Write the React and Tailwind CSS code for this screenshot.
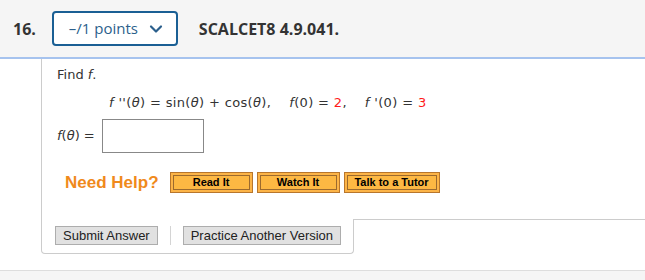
import React from 'react';
import { ChevronDown } from 'lucide-react';

const verdana = { fontFamily: '"DejaVu Sans", Verdana, sans-serif' };

const HelpButton = ({ label, width }) => (
  <button
    type="button"
    className={`h-[21px] ${width} border border-[#b8762c] bg-[#fdb843] shadow-[inset_0_0_0_2px_#fcb447,inset_0_0_0_3px_#9c6a2e] text-[11px] font-bold text-black font-['Liberation_Sans',Arial,sans-serif] leading-none`}
  >
    {label}
  </button>
);

const GreyButton = ({ children }) => (
  <button
    type="button"
    className="h-[19px] px-[7px] bg-[#e1e1e1] border border-[#adadad] text-[13px] leading-none text-[#222] font-['Liberation_Sans',Arial,sans-serif]"
  >
    {children}
  </button>
);

export default function App() {
  return (
    <div className="w-[645px] h-[280px] bg-white overflow-hidden font-['Open_Sans',sans-serif]">
      {/* question header */}
      <div className="h-[59px] bg-[#f5f5f5] border-b-2 border-[#a6c3ee] flex items-center">
        <span className="ml-[13px] text-[16px] font-bold text-[#333]">16.</span>
        <button
          type="button"
          className="ml-[16px] h-[35px] w-[126px] border-2 border-[#1a5f94] rounded-[4px] bg-white flex items-center pl-[15px] gap-[8px] text-[15px] text-[#2b5f8c]"
        >
          <span>–/1 points</span>
          <ChevronDown className="w-[20px] h-[20px]" strokeWidth={2.6} />
        </button>
        <span className="ml-[21px] text-[16px] font-bold text-[#333]">SCALCET8 4.9.041.</span>
      </div>

      {/* question body */}
      <div className="ml-[41px] border-l border-[#cccccc] h-[160px] pl-[15px] pt-[7px] flex flex-col text-[13px] text-[#333]" style={verdana}>
        <div className="h-[18px] flex items-center">
          Find&nbsp;<i>f</i>.
        </div>
        <div className="mt-[10px] h-[18px] flex items-center pl-[52px] whitespace-pre tracking-[0.35px]">
          <i>f</i>{" ''("}<i>θ</i>{") = sin("}<i>θ</i>{") + cos("}<i>θ</i>{"),    "}
          <i>f</i>{"(0) = "}<span className="text-[#ff1a1a]">2</span>{",    "}
          <i>f</i>{" '(0) = "}<span className="text-[#ff1a1a]">3</span>
        </div>
        <div className="mt-[7px] h-[34px] flex items-center">
          <span className="w-[45px]">
            <i>f</i>(<i>θ</i>) =
          </span>
          <div className="w-[102px] h-[34px] border border-[#888] bg-white"></div>
        </div>
        <div className="mt-[19px] h-[21px] flex items-center">
          <span className="ml-[8px] mr-[11px] text-[17px] font-bold text-[#f08a1c] font-['Liberation_Sans',Arial,sans-serif]">
            Need Help?
          </span>
          <div className="flex gap-[4px]">
            <HelpButton label="Read It" width="w-[83px]" />
            <HelpButton label="Watch It" width="w-[83px]" />
            <HelpButton label="Talk to a Tutor" width="w-[96px]" />
          </div>
        </div>
      </div>

      {/* submit tab */}
      <div className="flex">
        <div className="ml-[41px] w-[313px] h-[35px] border-l border-r border-b border-[#cccccc] rounded-b-[4px] flex items-start pt-[7px] pl-[13px]">
          <GreyButton>Submit Answer</GreyButton>
          <div className="mx-[12px] w-px h-[19px] bg-[#d4d4d4]"></div>
          <GreyButton>Practice Another Version</GreyButton>
        </div>
        <div className="flex-1 border-t border-[#cccccc]"></div>
      </div>

      <div className="mt-[16px] h-[20px] border-t border-[#dddddd] bg-[#f5f5f5]"></div>
    </div>
  );
}
